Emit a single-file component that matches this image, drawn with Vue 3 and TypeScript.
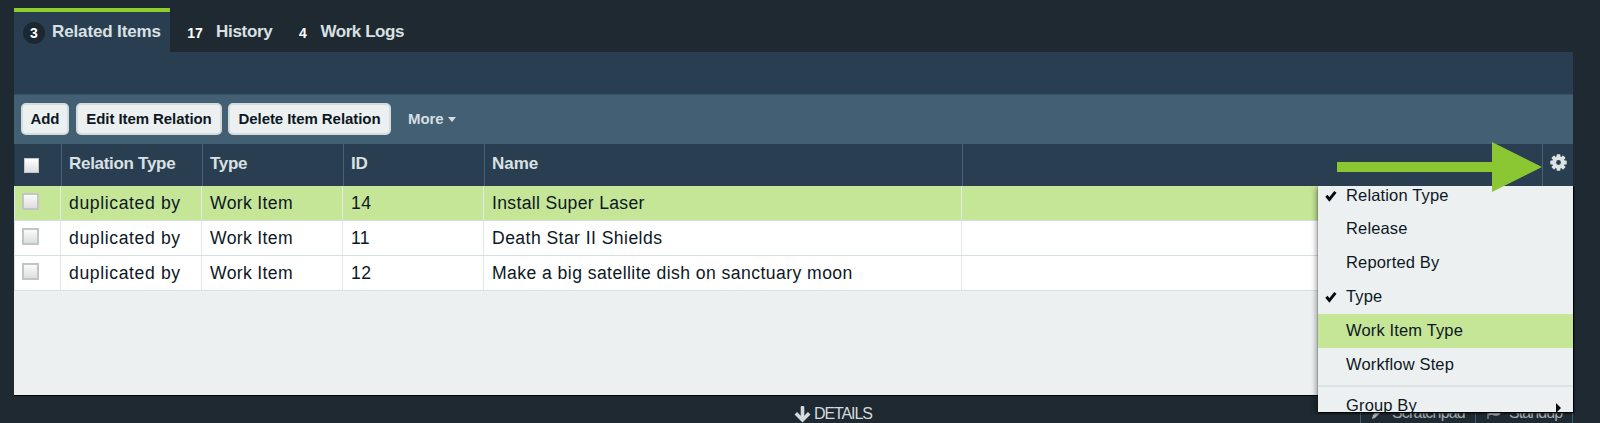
<script setup lang="ts">
interface Tab { count: number; label: string; kind: string }
interface Row { relation: string; type: string; id: number; name: string }
interface MenuItem { label: string; checked?: boolean; active?: boolean }

const tabs: Tab[] = [
  { count: 3, label: 'Related Items', kind: 'current' },
  { count: 17, label: 'History', kind: 'history' },
  { count: 4, label: 'Work Logs', kind: 'logs' },
]
const actions: { label: string; kind: string }[] = [
  { label: 'Add', kind: 'add' },
  { label: 'Edit Item Relation', kind: 'edit' },
  { label: 'Delete Item Relation', kind: 'delete' },
]
const columns: string[] = ['Relation Type', 'Type', 'ID', 'Name', '']
const rows: Row[] = [
  { relation: 'duplicated by', type: 'Work Item', id: 14, name: 'Install Super Laser' },
  { relation: 'duplicated by', type: 'Work Item', id: 11, name: 'Death Star II Shields' },
  { relation: 'duplicated by', type: 'Work Item', id: 12, name: 'Make a big satellite dish on sanctuary moon' },
]
const menu: MenuItem[] = [
  { label: 'Relation Type', checked: true },
  { label: 'Release' },
  { label: 'Reported By' },
  { label: 'Type', checked: true },
  { label: 'Work Item Type', active: true },
  { label: 'Workflow Step' },
]
</script>

<template>
  <div class="page">
    <nav class="tabs">
      <div v-for="tab in tabs" :key="tab.label" class="tab" :class="tab.kind">
        <span class="count">{{ tab.count }}</span>
        <span class="tab-label">{{ tab.label }}</span>
      </div>
    </nav>
    <main class="panel">
      <div class="band"></div>
      <div class="toolbar">
        <button v-for="a in actions" :key="a.kind" class="btn" :class="a.kind">{{ a.label }}</button>
        <span class="more">More<i class="caret"></i></span>
      </div>
      <div class="head">
        <div class="hcell"><span class="box"></span></div>
        <div v-for="c in columns" :key="c" class="hcell">{{ c }}</div>
        <div class="hcell gear">
          <svg width="17" height="17" viewBox="-8.5 -8.5 17 17">
            <g fill="#dce4e5">
              <rect v-for="n in 4" :key="n" x="-1.9" y="-8.2" width="3.8" height="16.4" rx=".6" :transform="`rotate(${n * 45})`" />
              <circle r="6.2" />
            </g>
            <circle r="2.4" fill="#2a3e51" />
          </svg>
        </div>
      </div>
      <div class="body">
        <div v-for="(r, i) in rows" :key="r.id" class="row" :class="{ selected: i === 0 }">
          <div class="cell"><span class="box"></span></div>
          <div class="cell relation">{{ r.relation }}</div>
          <div class="cell">{{ r.type }}</div>
          <div class="cell">{{ r.id }}</div>
          <div class="cell name">{{ r.name }}</div>
          <div class="cell last"></div>
        </div>
      </div>
    </main>
    <footer class="footer">
      <div class="details">
        <svg width="17" height="17" viewBox="0 0 17 17" fill="none" stroke="#d5dadd" stroke-width="3.6">
          <path d="M8.5 1.5v12" stroke-linecap="round" />
          <path d="M1.8 7.3l6.7 6.7 6.7-6.7" />
        </svg>
        <span>DETAILS</span>
      </div>
      <div class="foot-item pad">
        <svg width="12" height="14" viewBox="0 0 12 14"><path d="M1 13l1-4 7-8 3 3-8 8z" fill="#a5aeb2" /></svg>
        <span>Scratchpad</span>
      </div>
      <div class="foot-item stand">
        <svg width="14" height="14" viewBox="0 0 14 14"><path d="M1 1v12M2 3c4-3 6 2 11-1v6c-5 3-7-1-11 1z" fill="#a5aeb2" stroke="#a5aeb2" /></svg>
        <span>Standup</span>
      </div>
    </footer>

    <div class="menu">
      <div v-for="m in menu" :key="m.label" class="item" :class="{ active: m.active }">
        <svg v-if="m.checked" class="check" width="12" height="12" viewBox="0 0 12 12">
          <path d="M1.4 5.7l3 3.7 6-7.5" fill="none" stroke="#080d12" stroke-width="3" />
        </svg>
        <span>{{ m.label }}</span>
      </div>
      <div class="rule"></div>
      <div class="item group"><span>Group By</span><i class="arrow"></i></div>
    </div>
    <svg class="pointer" width="206" height="50" viewBox="0 0 206 50">
      <path d="M0 20h155V0l50 25-50 25V30H0z" fill="#8bc732" />
    </svg>
  </div>
</template>

<style>
html, body { margin: 0; background: #1e2931; overflow: hidden; }
</style>

<style scoped>
.page {
  position: relative; width: 1600px; height: 423px; overflow: hidden; box-sizing: border-box;
  padding: 8px 27px 0 14px; background: #1e2931;
  font-family: "Liberation Sans", Arial, sans-serif; color: #0d1824;
}
.page * { box-sizing: border-box; }
.tabs { display: flex; height: 44px; }
.tab { display: flex; align-items: center; padding-top: 4px; color: #d9e1e3; font-weight: 700; font-size: 17px; white-space: nowrap; }
.tab.current { width: 156px; padding: 0 0 0 9px; background: #2a3e51; border-top: 4px solid #8dcd2c; letter-spacing: -.13px; }
.count { color: #fff; font-size: 14px; line-height: 22px; text-align: center; letter-spacing: 0; margin-top: 2px; }
.current .count { width: 22px; height: 22px; border-radius: 50%; background: #1c2831; margin-right: 7px; }
.history { padding-left: 17px; letter-spacing: -.3px; }
.history .count { width: 16px; margin-right: 13px; }
.logs { padding-left: 26px; letter-spacing: -.45px; }
.logs .count { width: 9px; margin-right: 13px; }
.panel { height: 344px; background: #ecf0f1; border-bottom: 1px solid #000; }
.band { height: 42px; background: #2a3e51; }
.toolbar { display: flex; align-items: flex-start; height: 50px; padding: 8px 7px 0; background: #425f74; border-top: 1px solid #375267; }
.btn {
  height: 32px; padding: 0 0 1px; margin-right: 6px; border: 2px solid #d3dddd; border-radius: 5px; background: #ecf0f1;
  color: #0d1824; font: 700 15px "Liberation Sans", Arial, sans-serif; letter-spacing: -.07px; white-space: nowrap;
}
.add { width: 48px; margin-right: 7px; }
.edit { width: 146px; }
.delete { width: 163px; }
.more { display: flex; align-items: center; height: 31px; margin-left: 11px; color: #d5dee2; font-size: 15px; font-weight: 700; letter-spacing: -.1px; }
.caret { margin: 1px 0 0 5px; border: 4px solid transparent; border-top: 5px solid #d5dee2; border-bottom: 0; }
.head, .row { display: grid; }
.head { grid-template-columns: 46px 141px 141px 141px 478px 580px 31px; height: 42px; background: #2a3e51; border-left: 1px solid #233442; }
.hcell { padding: 10px 0 0 7px; border-left: 1px solid #456277; color: #d9e1e3; font-weight: 700; font-size: 17px; line-height: 20px; letter-spacing: -.3px; }
.hcell:first-child { border: 0; padding: 14px 0 0 9px; }
.hcell:nth-child(5) { letter-spacing: -.05px; }
.hcell.gear { padding: 10px 0 0 7px; }
.gear svg { display: block; }
.box { display: block; width: 15px; height: 15px; background: linear-gradient(#fff, #dedede); border: 1px solid #c2c7c9; }
.body { border-left: 1px solid #dce5e5; }
.row { grid-template-columns: 46px 141px 141px 141px 478px 1fr; height: 35px; background: #fff; border-bottom: 1px solid #d4dfdf; box-shadow: 0 1px #eff3f3; position: relative; }
.row.selected { background: #c5e597; }
.cell { padding: 7px 0 0 8px; border-right: 1px solid #e2e9e9; font-size: 17.6px; line-height: 20px; letter-spacing: .35px; white-space: nowrap; }
.relation { letter-spacing: .62px; }
.name { letter-spacing: .43px; }
.row.selected .name { letter-spacing: .32px; }
.cell:first-child { padding: 7px 0 0 7px; }
.cell.last { border: 0; }
.cell .box { width: 17px; height: 17px; border: 2px solid #c0c6c1; background: linear-gradient(#fafafa, #dedede); }
.footer { position: relative; height: 27px; }
.details { position: absolute; left: 780px; top: 9px; display: flex; align-items: center; color: #d5dadd; font-size: 16px; letter-spacing: -1.1px; }
.details svg { margin-right: 3px; }
.foot-item { position: absolute; top: 0; display: flex; align-items: center; height: 27px; padding: 6px 0 0 10px; border-left: 1px solid #3b5b73; color: #a5aeb2; font-size: 16px; letter-spacing: -.8px; }
.pad { left: 1346px; width: 115px; }
.pad svg { margin-right: 9px; }
.stand { left: 1461px; width: 98px; border-right: 1px solid #3b5b73; padding-left: 11px; letter-spacing: -.9px; }
.stand svg { margin-right: 8px; }
.menu { position: absolute; left: 1318px; top: 186px; width: 255px; height: 226px; overflow: hidden; background: #ecf0f1; box-shadow: 0 0 0 1px rgba(0, 0, 0, .12), 1px 1px 1px #000, -2px 2px 5px rgba(0, 0, 0, .35); clip-path: inset(0 -3px -3px -8px); }
.item { position: relative; display: flex; align-items: center; height: 34px; padding: 0 0 1px 28px; font-size: 16.5px; letter-spacing: .15px; white-space: nowrap; }
.item:first-child { height: 26px; padding-bottom: 8px; }
.item.active { background: #c5e597; }
.item.group { padding-bottom: 3px; }
.check { position: absolute; left: 7px; top: 11px; }
.item:first-child .check { top: 4px; }
.rule { height: 2px; margin: 3px 0; background: #dae2e3; }
.arrow { position: absolute; right: 12px; top: 13px; border: 5px solid transparent; border-left-color: #080d12; border-right: 0; }
.pointer { position: absolute; left: 1337px; top: 142px; }
</style>
